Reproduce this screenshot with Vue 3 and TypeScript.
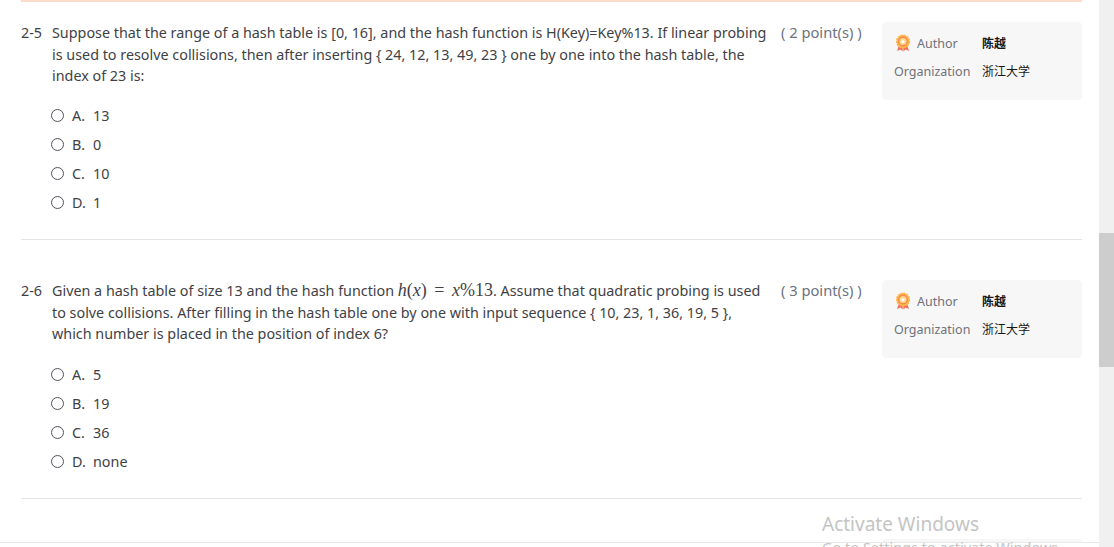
<script setup lang="ts">
interface Question {
  no: string
  score: number
  lines: string[]
  options: { label: string; text: string }[]
  math?: boolean
}

const questions: Question[] = [
  {
    no: '2-5',
    score: 2,
    lines: [
      'Suppose that the range of a hash table is [0, 16], and the hash function is H(Key)=Key%13. If linear probing',
      'is used to resolve collisions, then after inserting { 24, 12, 13, 49, 23 } one by one into the hash table, the',
      'index of 23 is:',
    ],
    options: [
      { label: 'A.', text: '13' },
      { label: 'B.', text: '0' },
      { label: 'C.', text: '10' },
      { label: 'D.', text: '1' },
    ],
  },
  {
    no: '2-6',
    score: 3,
    math: true,
    lines: [
      '',
      'to solve collisions. After filling in the hash table one by one with input sequence { 10, 23, 1, 36, 19, 5 },',
      'which number is placed in the position of index 6?',
    ],
    options: [
      { label: 'A.', text: '5' },
      { label: 'B.', text: '19' },
      { label: 'C.', text: '36' },
      { label: 'D.', text: 'none' },
    ],
  },
]
</script>

<template>
  <div class="page">
    <main class="content">
      <div class="top-line"></div>
      <section v-for="q in questions" :key="q.no" class="question">
        <div class="body">
          <div class="head">
            <span class="no">{{ q.no }}</span>
            <div class="stem">
              <template v-for="(line, i) in q.lines" :key="i">
                <div v-if="q.math && i === 0" class="line">
                  Given a hash table of size 13 and the hash function
                  <span class="math"><i>h</i>(<i>x</i>) = <i>x</i>%13</span>. Assume that quadratic probing is used
                </div>
                <div v-else class="line">{{ line }}</div>
              </template>
            </div>
            <span class="score">( {{ q.score }} point(s) )</span>
          </div>
          <ul class="options">
            <li v-for="o in q.options" :key="o.label" class="option">
              <span class="radio"></span>
              <span class="label">{{ o.label }}</span>
              <span>{{ o.text }}</span>
            </li>
          </ul>
        </div>
        <aside class="info">
          <div class="info-row">
            <div class="info-key">
              <svg class="medal" viewBox="0 0 16 18" width="16" height="18">
                <path d="M4 11 L2 17 L5.5 15.5 L7.5 17.5 L8 12 Z" fill="#f0705a" />
                <path d="M12 11 L14 17 L10.5 15.5 L8.5 17.5 L8 12 Z" fill="#f0705a" />
                <circle cx="8" cy="7.5" r="6.4" fill="#fbb84a" stroke="#fbb84a" stroke-width="1.4" stroke-dasharray="2 1" />
                <circle cx="8" cy="7.5" r="5" fill="#f78a50" />
                <circle cx="8" cy="7.5" r="3.6" fill="#fdd98a" />
                <polygon points="8,5.4 8.7,6.9 10.2,7.1 9.1,8.1 9.4,9.6 8,8.9 6.6,9.6 6.9,8.1 5.8,7.1 7.3,6.9" fill="#fff" />
              </svg>
              <span>Author</span>
            </div>
            <span class="info-value bold">陈越</span>
          </div>
          <div class="info-row">
            <div class="info-key">Organization</div>
            <span class="info-value">浙江大学</span>
          </div>
        </aside>
      </section>
      <section class="question">
        <div class="body"></div>
        <aside class="info"></aside>
      </section>
    </main>
    <div class="scrollbar"><div class="thumb"></div></div>
    <div class="bottom-edge"></div>
    <div class="activate">
      <div class="activate-title">Activate Windows</div>
      <div class="activate-sub">Go to Settings to activate Windows.</div>
    </div>
  </div>
</template>

<style scoped>
.page {
  width: 1114px;
  height: 547px;
  overflow: hidden;
  display: flex;
  position: relative;
  background: #fff;
  font-family: 'Noto Sans', 'Open Sans', 'Noto Sans CJK SC', sans-serif;
  color: #3f3f46;
}
.content {
  width: 1061px;
  margin-left: 21px;
  flex-shrink: 0;
}
.top-line {
  height: 2px;
  background: #fbdccb;
}
.question {
  display: flex;
  justify-content: space-between;
  flex-shrink: 0;
  padding: 20px 0 0;
  height: 238px;
  box-sizing: border-box;
  border-bottom: 1px solid #e4e4e7;
}
.question + .question {
  padding-top: 40px;
  height: 259px;
}
.body {
  flex: 1;
}
.head {
  display: flex;
  font-size: 14.35px;
  line-height: 21.5px;
}
.no {
  width: 31px;
  flex-shrink: 0;
}
.stem {
  width: 729px;
  flex-shrink: 0;
}
.line {
  white-space: nowrap;
  height: 21.5px;
}
.math {
  font-family: 'Liberation Serif', serif;
  font-size: 18px;
  word-spacing: 3px;
}
.score {
  font-size: 14.7px;
  color: #6b7280;
  white-space: nowrap;
}
.options {
  list-style: none;
  margin: 14px 0 0 30px;
  padding: 0;
}
.question + .question .options {
  margin-top: 15px;
}
.option {
  display: flex;
  align-items: center;
  height: 29px;
  font-size: 14.35px;
}
.radio {
  width: 11px;
  height: 11px;
  border: 1px solid #52525b;
  border-radius: 50%;
  margin-right: 8px;
}
.label {
  width: 21px;
}
.info {
  width: 200px;
  height: 78px;
  flex-shrink: 0;
  box-sizing: border-box;
  padding: 7px 12px;
  border-radius: 4px;
  background: #f7f7f7;
  font-size: 12.5px;
}
.info-row {
  display: flex;
  align-items: center;
  height: 28px;
}
.info-key {
  width: 88px;
  display: flex;
  align-items: center;
  gap: 6px;
  color: #71717a;
}
.medal {
  margin-left: 1px;
}
.info-value {
  color: #18181b;
  font-size: 12px;
}
.bold {
  font-weight: 700;
}
.scrollbar {
  position: absolute;
  right: 0;
  top: 0;
  width: 15px;
  height: 100%;
  background: #f0f0f0;
}
.thumb {
  margin-top: 233px;
  height: 134px;
  background: #cdcdcd;
}
.bottom-edge {
  position: absolute;
  left: 0;
  right: 15px;
  bottom: 0;
  height: 4px;
  background: #fff;
  border-top: 1px solid #e8e8e8;
}
.activate {
  position: absolute;
  left: 822px;
  top: 512px;
  height: 35px;
  overflow: hidden;
  color: #c4c4c4;
}
.activate-title {
  font-size: 19px;
  line-height: 24px;
}
.activate-sub {
  font-size: 14.5px;
  line-height: 20px;
  margin-top: 1px;
}
</style>

<style>
html, body { margin: 0; background: #fff; overflow: hidden; }
</style>
